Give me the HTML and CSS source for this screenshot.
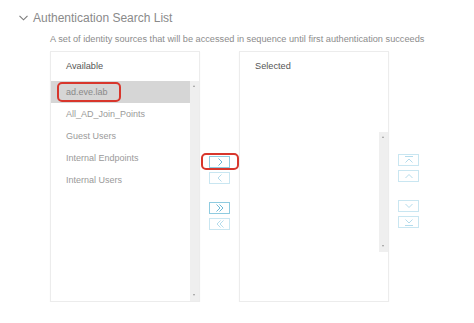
FILE: index.html
```html
<!DOCTYPE html>
<html lang="en">
<head>
  <meta charset="UTF-8">
  <title>Authentication Search List</title>
  <link rel="stylesheet" href="styles.css">
</head>
<body>
  <div class="section">
    <div class="title">
      <svg class="caret" width="9" height="6" viewBox="0 0 9 6"><path d="M0.5 0.8 L4.5 4.8 L8.5 0.8" fill="none" stroke="#7a7a7a" stroke-width="1.1"/></svg>
      <span>Authentication Search List</span>
    </div>
    <p class="desc">A set of identity sources that will be accessed in sequence until first authentication succeeds</p>

    <div class="lists">
      <div class="box">
        <div class="box-head">Available</div>
        <div class="box-body">
          <ul class="items">
            <li class="item selected"><span class="mark">ad.eve.lab</span></li>
            <li class="item">All_AD_Join_Points</li>
            <li class="item">Guest Users</li>
            <li class="item">Internal Endpoints</li>
            <li class="item">Internal Users</li>
          </ul>
          <div class="scroll full">
            <span class="arr up"></span>
            <span class="arr down"></span>
          </div>
        </div>
      </div>

      <div class="move">
        <button class="btn marked"><svg width="8" height="8" viewBox="0 0 8 8"><path d="M2.5 0.5 L6 4 L2.5 7.5" /></svg></button>
        <button class="btn off"><svg width="8" height="8" viewBox="0 0 8 8"><path d="M5.5 0.5 L2 4 L5.5 7.5" /></svg></button>
        <button class="btn gap"><svg width="10" height="8" viewBox="0 0 10 8"><path d="M1.5 0.5 L5 4 L1.5 7.5 M4.5 0.5 L8 4 L4.5 7.5" /></svg></button>
        <button class="btn off"><svg width="10" height="8" viewBox="0 0 10 8"><path d="M8.5 0.5 L5 4 L8.5 7.5 M5.5 0.5 L2 4 L5.5 7.5" /></svg></button>
      </div>

      <div class="box">
        <div class="box-head">Selected</div>
        <div class="box-body">
          <ul class="items"></ul>
          <div class="scroll-col">
            <div class="scroll part">
              <span class="arr up"></span>
              <span class="arr down"></span>
            </div>
          </div>
        </div>
      </div>

      <div class="order">
        <button class="btn off"><svg width="10" height="8" viewBox="0 0 10 8"><path d="M1 0.5 H9 M1.5 6.5 L5 3 L8.5 6.5" /></svg></button>
        <button class="btn off"><svg width="10" height="8" viewBox="0 0 10 8"><path d="M1.5 6 L5 2.5 L8.5 6" /></svg></button>
        <button class="btn off gap"><svg width="10" height="8" viewBox="0 0 10 8"><path d="M1.5 2 L5 5.5 L8.5 2" /></svg></button>
        <button class="btn off"><svg width="10" height="8" viewBox="0 0 10 8"><path d="M1.5 1.5 L5 5 L8.5 1.5 M1 7.5 H9" /></svg></button>
      </div>
    </div>
  </div>
</body>
</html>
```

FILE: styles.css
```css
body {
  margin: 0;
  background-color: #fff;
  font-family: "Liberation Sans", Arial, sans-serif;
  color: #888;
}

.section {
  padding: 11px 0 0 19px;
}

.title {
  display: flex;
  align-items: center;
  gap: 5px;
  font-size: 12px;
  color: #8a8a8a;
  height: 14px;
}

.desc {
  margin: 9px 0 0 31px;
  font-size: 9.2px;
  color: #8c8c8c;
  white-space: nowrap;
}

.lists {
  display: flex;
  margin: 7px 0 0 31px;
}

.box {
  width: 148px;
  height: 249px;
  border: 1px solid #ececec;
  display: flex;
  flex-direction: column;
  box-shadow: 0 1px 1px #f2f2f2;
}

.box-head {
  height: 29px;
  padding-left: 15px;
  line-height: 28px;
  font-size: 9.2px;
  color: #555;
}

.box-body {
  flex: 1;
  display: flex;
}

.items {
  flex: 1;
  margin: 0;
  padding: 0;
  list-style: none;
}

.item {
  height: 22px;
  line-height: 22px;
  padding-left: 15px;
  font-size: 9px;
  color: #9a9a9a;
}

.item.selected {
  background-color: #d6d6d6;
  color: #8a8a8a;
}

.mark {
  position: relative;
}

.mark::after {
  content: "";
  position: absolute;
  left: -9px;
  right: -13px;
  top: -5px;
  bottom: -5px;
  border: 2px solid #d8362c;
  border-radius: 5px;
}

.scroll {
  width: 9px;
  background-color: #efefef;
  position: relative;
}

.scroll-col {
  width: 9px;
  padding-top: 51px;
}

.scroll.part {
  height: 120px;
}

.arr {
  position: absolute;
  left: 3px;
  width: 0;
  height: 0;
  border-left: 1.5px solid transparent;
  border-right: 1.5px solid transparent;
}

.arr.up {
  top: 4px;
  border-bottom: 2px solid #999;
}

.arr.down {
  bottom: 5px;
  border-top: 2px solid #999;
}

.move {
  width: 39px;
  display: flex;
  flex-direction: column;
  align-items: center;
  padding-top: 105px;
}

.order {
  margin-left: 9px;
  display: flex;
  flex-direction: column;
  padding-top: 103px;
}

.btn {
  width: 21px;
  height: 12px;
  padding: 0;
  margin: 0 0 4px;
  border: 1px solid #8fcbe0;
  background-color: #fff;
  display: flex;
  align-items: center;
  justify-content: center;
  position: relative;
}

.btn svg path {
  fill: none;
  stroke: #6fb9d6;
  stroke-width: 1;
}

.btn.off {
  border-color: #c9e6f1;
}

.btn.off svg path {
  stroke: #b5dcec;
}

.btn.gap {
  margin-top: 14px;
}

.marked::after {
  content: "";
  position: absolute;
  left: -9px;
  right: -10px;
  top: -4px;
  bottom: -3px;
  border: 2px solid #d8362c;
  border-radius: 5px;
}
```
